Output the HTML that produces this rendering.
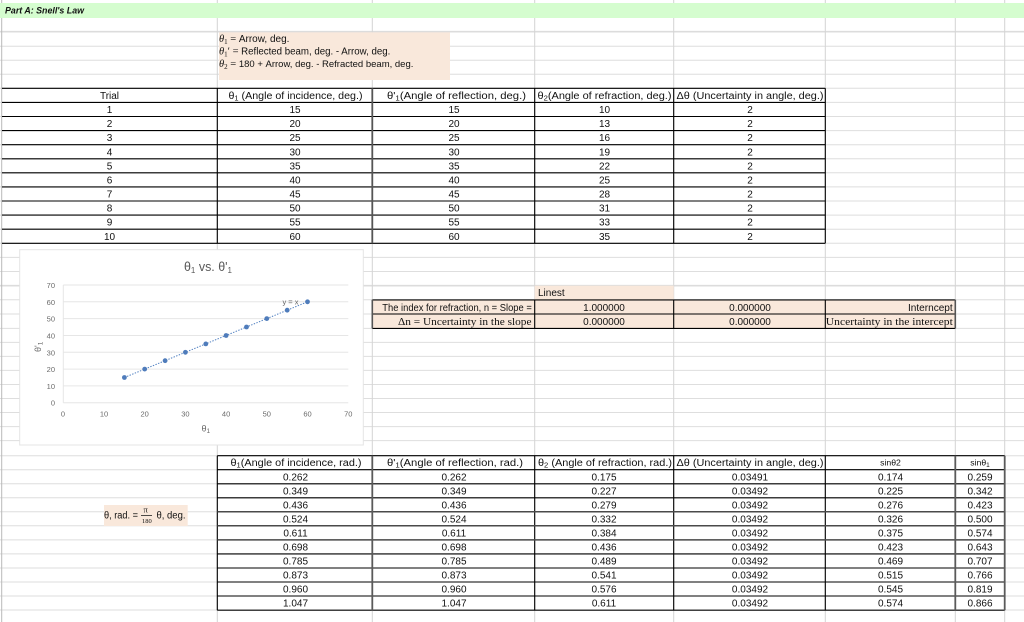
<!DOCTYPE html>
<html><head><meta charset="utf-8"><style>
html,body{margin:0;padding:0;background:#fff;width:1024px;height:622px;overflow:hidden}
svg{display:block}
text{font-family:"Liberation Sans",sans-serif;font-size:10px;fill:#111}
.c text{text-anchor:middle}
.s{font-family:"Liberation Serif",serif}
.ch text{fill:#6a6a6a;font-size:7.5px}
.f text{font-family:"Liberation Serif",serif;font-size:10.5px}
</style></head><body>
<svg width="1024" height="622" viewBox="0 0 1024 622" xmlns="http://www.w3.org/2000/svg">
<rect width="1024" height="622" fill="#fff"/>
<!-- grid -->
<path fill="none" stroke="#dedede" stroke-width="1" d="M0 46.3H1024M0 60.3H1024M0 74.3H1024M0 88.3H1024M0 102.4H1024M0 116.5H1024M0 130.6H1024M0 144.7H1024M0 158.8H1024M0 172.8H1024M0 186.9H1024M0 201H1024M0 215.1H1024M0 229.2H1024M0 243.3H1024M0 257.4H1024M0 271.5H1024M0 299.7H1024M0 314H1024M0 328.4H1024M0 342.4H1024M0 356.4H1024M0 370.4H1024M0 384.5H1024M0 398.5H1024M0 412.5H1024M0 426.6H1024M0 440.6H1024M0 455.7H1024M0 469.7H1024M0 483.8H1024M0 497.8H1024M0 511.8H1024M0 525.8H1024M0 539.9H1024M0 553.9H1024M0 568H1024M0 582H1024M0 596H1024M0 610H1024"/>
<path fill="none" stroke="#dcdcdc" stroke-width="1.6" d="M0 31.7H1024M0 285.7H1024"/>
<path fill="none" stroke="#d4d4d4" stroke-width="1" d="M217.3 0V622M372.3 0V622M534.7 0V622M673.7 0V622M825.3 0V622M955.3 0V622M1004.7 0V622"/>
<path fill="none" stroke="#b9b9b9" stroke-width="1" d="M1.7 0V622"/>
<!-- green title -->
<rect x="0" y="3" width="1024" height="15" fill="#d5fdcf"/>
<text x="5" y="13.5" font-weight="bold" font-style="italic" style="font-size:9px" textLength="79" lengthAdjust="spacingAndGlyphs">Part A: Snell's Law</text>
<!-- formula box -->
<rect x="219" y="32.3" width="231" height="47.7" fill="#f9e8db"/>
<g class="f">
<text x="219" y="42"><tspan font-style="italic">θ</tspan><tspan dy="2" style="font-size:7px">1</tspan><tspan dy="-2"> = </tspan><tspan style="font-family:'Liberation Sans';font-size:10px">Arrow, deg.</tspan></text>
<text x="219" y="54.5"><tspan font-style="italic">θ</tspan><tspan dy="2" style="font-size:7px">1</tspan><tspan dy="-2">′ = </tspan><tspan style="font-family:'Liberation Sans';font-size:9.7px">Reflected beam, deg. - Arrow, deg.</tspan></text>
<text x="219" y="67"><tspan font-style="italic">θ</tspan><tspan dy="2" style="font-size:7px">2</tspan><tspan dy="-2"> = </tspan><tspan style="font-family:'Liberation Sans';font-size:9.5px">180 + Arrow, deg. - Refracted beam, deg.</tspan></text>
</g>
<!-- top table -->
<path fill="none" stroke="#000" stroke-width="1.1" d="M2 88.3H825.3M2 102.4H825.3M2 116.5H825.3M2 130.6H825.3M2 144.7H825.3M2 158.8H825.3M2 172.8H825.3M2 186.9H825.3M2 201H825.3M2 215.1H825.3M2 229.2H825.3M2 243.3H825.3M217.3 88.3V243.3M534.7 88.3V243.3M673.7 88.3V243.3M825.3 88.3V243.3"/>
<path fill="none" stroke="#555" stroke-width="1.8" d="M372.3 88.3V243.3"/>
<text x="109.5" y="99" text-anchor="middle">Trial</text>
<text x="228.5" y="99" textLength="134" lengthAdjust="spacingAndGlyphs">θ<tspan dy="1.5" style="font-size:7px">1</tspan><tspan dy="-1.5"> (Angle of incidence, deg.)</tspan></text>
<text x="387" y="99" textLength="139" lengthAdjust="spacingAndGlyphs">θ'<tspan dy="1.5" style="font-size:7px">1</tspan><tspan dy="-1.5">(Angle of reflection, deg.)</tspan></text>
<text x="537.5" y="99" textLength="134" lengthAdjust="spacingAndGlyphs">θ<tspan dy="1.5" style="font-size:7px">2</tspan><tspan dy="-1.5">(Angle of refraction, deg.)</tspan></text>
<text x="676.5" y="99" textLength="147" lengthAdjust="spacingAndGlyphs">Δθ (Uncertainty in angle, deg.)</text>
<g class="c">
<text x="109.5" y="113">1</text><text x="109.5" y="127.1">2</text><text x="109.5" y="141.2">3</text><text x="109.5" y="155.3">4</text><text x="109.5" y="169.4">5</text><text x="109.5" y="183.4">6</text><text x="109.5" y="197.5">7</text><text x="109.5" y="211.6">8</text><text x="109.5" y="225.7">9</text><text x="109.5" y="239.8">10</text>
<text x="295" y="113">15</text><text x="295" y="127.1">20</text><text x="295" y="141.2">25</text><text x="295" y="155.3">30</text><text x="295" y="169.4">35</text><text x="295" y="183.4">40</text><text x="295" y="197.5">45</text><text x="295" y="211.6">50</text><text x="295" y="225.7">55</text><text x="295" y="239.8">60</text>
<text x="454" y="113">15</text><text x="454" y="127.1">20</text><text x="454" y="141.2">25</text><text x="454" y="155.3">30</text><text x="454" y="169.4">35</text><text x="454" y="183.4">40</text><text x="454" y="197.5">45</text><text x="454" y="211.6">50</text><text x="454" y="225.7">55</text><text x="454" y="239.8">60</text>
<text x="604.5" y="113">10</text><text x="604.5" y="127.1">13</text><text x="604.5" y="141.2">16</text><text x="604.5" y="155.3">19</text><text x="604.5" y="169.4">22</text><text x="604.5" y="183.4">25</text><text x="604.5" y="197.5">28</text><text x="604.5" y="211.6">31</text><text x="604.5" y="225.7">33</text><text x="604.5" y="239.8">35</text>
<text x="750" y="113">2</text><text x="750" y="127.1">2</text><text x="750" y="141.2">2</text><text x="750" y="155.3">2</text><text x="750" y="169.4">2</text><text x="750" y="183.4">2</text><text x="750" y="197.5">2</text><text x="750" y="211.6">2</text><text x="750" y="225.7">2</text><text x="750" y="239.8">2</text>
</g>
<!-- chart -->
<rect x="19.7" y="249.7" width="343.6" height="195.3" fill="#fff" stroke="#e4e4e4" stroke-width="1"/>
<path fill="none" stroke="#e6e6e6" stroke-width="1" d="M63.3 285H348.3M63.3 301.8H348.3M63.3 318.6H348.3M63.3 335.5H348.3M63.3 352.3H348.3M63.3 369.1H348.3M63.3 385.9H348.3M63.3 402.7H348.3M63.3 285V402.7"/>
<path fill="none" stroke="#4f7fc0" stroke-width="1" stroke-dasharray="1.4 1.4" d="M124.4 377.5L307.5 301.8"/>
<g fill="#4f7cbb">
<circle cx="124.4" cy="377.5" r="2.4"/><circle cx="144.7" cy="369.1" r="2.4"/><circle cx="165.1" cy="360.7" r="2.4"/><circle cx="185.4" cy="352.3" r="2.4"/><circle cx="205.8" cy="343.9" r="2.4"/><circle cx="226.1" cy="335.5" r="2.4"/><circle cx="246.5" cy="327" r="2.4"/><circle cx="266.8" cy="318.6" r="2.4"/><circle cx="287.2" cy="310.2" r="2.4"/><circle cx="307.5" cy="301.8" r="2.4"/>
</g>
<text x="184" y="271" textLength="48" lengthAdjust="spacingAndGlyphs" style="font-family:'Liberation Sans',sans-serif;font-size:12.5px;fill:#595959">θ<tspan dy="2" style="font-size:8px;fill:#595959">1</tspan><tspan dy="-2" style="fill:#595959"> vs. θ'</tspan><tspan dy="2" style="font-size:8px;fill:#595959">1</tspan></text>
<g class="ch">
<text x="55" y="288" text-anchor="end">70</text><text x="55" y="304.8" text-anchor="end">60</text><text x="55" y="321.6" text-anchor="end">50</text><text x="55" y="338.5" text-anchor="end">40</text><text x="55" y="355.3" text-anchor="end">30</text><text x="55" y="372.1" text-anchor="end">20</text><text x="55" y="388.9" text-anchor="end">10</text><text x="55" y="405.7" text-anchor="end">0</text>
<text x="63" y="416.5" text-anchor="middle">0</text><text x="104" y="416.5" text-anchor="middle">10</text><text x="144.7" y="416.5" text-anchor="middle">20</text><text x="185.4" y="416.5" text-anchor="middle">30</text><text x="226.1" y="416.5" text-anchor="middle">40</text><text x="266.8" y="416.5" text-anchor="middle">50</text><text x="307.5" y="416.5" text-anchor="middle">60</text><text x="348.3" y="416.5" text-anchor="middle">70</text>
<text x="290.5" y="304.5" text-anchor="middle">y = x</text>
<text x="201.5" y="431.5" style="font-family:'Liberation Sans',sans-serif;font-size:9px">θ<tspan dy="1.5" style="font-size:6.5px">1</tspan></text>
<text transform="translate(41,352) rotate(-90)" style="font-family:'Liberation Sans',sans-serif;font-size:9px">θ'<tspan dy="1.5" style="font-size:6.5px">1</tspan></text>
</g>
<!-- linest table -->
<rect x="534.7" y="285.7" width="139" height="14" fill="#f9e8db"/>
<rect x="372.3" y="299.7" width="583" height="28.7" fill="#f9e8db"/>
<path fill="none" stroke="#000" stroke-width="1.1" d="M372.3 299.9H955.3M372.3 314H955.3M372.3 328.4H955.3M534.7 299.7V328.4M673.7 299.7V328.4M825.3 299.7V328.4"/>
<path fill="none" stroke="#555" stroke-width="1.6" d="M372.3 299.7V328.4M955.3 299.7V328.4"/>
<text x="538" y="296" style="font-size:10px">Linest</text>
<text x="382.3" y="311" textLength="149.5" lengthAdjust="spacingAndGlyphs">The index for refraction, n = Slope =</text>
<text x="398" y="325" class="s" textLength="133.5" lengthAdjust="spacingAndGlyphs" style="font-size:10.5px">Δn = Uncertainty in the slope</text>
<text x="908" y="311" textLength="44.7" lengthAdjust="spacingAndGlyphs">Interncept</text>
<text x="825.8" y="325" class="s" textLength="127" lengthAdjust="spacingAndGlyphs" style="font-size:10.5px">Uncertainty in the intercept</text>
<g class="c">
<text x="604" y="311">1.000000</text><text x="604" y="325">0.000000</text>
<text x="750" y="311">0.000000</text><text x="750" y="325">0.000000</text>
</g>
<!-- conversion box -->
<rect x="104" y="505" width="83.7" height="21" fill="#f9e8db"/>
<text x="104" y="518.5" textLength="34" lengthAdjust="spacingAndGlyphs" style="font-size:10px">θ, rad. =</text>
<text x="143.5" y="512.5" style="font-family:'Liberation Serif',serif;font-size:8.5px">π</text>
<path d="M141 515.5H152" stroke="#222" stroke-width=".8"/>
<text x="142" y="522.8" style="font-family:'Liberation Serif',serif;font-size:6.5px">180</text>
<text x="156.5" y="518.5" textLength="29" lengthAdjust="spacingAndGlyphs" style="font-size:10px">θ, deg.</text>
<!-- bottom table -->
<path fill="none" stroke="#000" stroke-width="1.1" d="M217.3 455.7H1004.7M217.3 469.7H1004.7M217.3 483.8H1004.7M217.3 497.8H1004.7M217.3 553.9H1004.7M217.3 568H1004.7M217.3 582H1004.7M217.3 596H1004.7M217.3 610.2H1004.7M217.3 455.7V610.2M534.7 455.7V610.2M673.7 455.7V610.2M825.3 455.7V610.2"/>
<path fill="none" stroke="#4a4a4a" stroke-width="1.5" d="M217.3 511.8H1004.7M217.3 525.8H1004.7M217.3 539.9H1004.7"/>
<path fill="none" stroke="#5a5a5a" stroke-width="1.8" d="M372.3 455.7V610.2M955.3 455.7V610.2M1004.7 455.7V610.2"/>
<text x="230.5" y="466" textLength="131" lengthAdjust="spacingAndGlyphs">θ<tspan dy="1.5" style="font-size:7px">1</tspan><tspan dy="-1.5">(Angle of incidence, rad.)</tspan></text>
<text x="387" y="466" textLength="136" lengthAdjust="spacingAndGlyphs">θ'<tspan dy="1.5" style="font-size:7px">1</tspan><tspan dy="-1.5">(Angle of reflection, rad.)</tspan></text>
<text x="538" y="466" textLength="134" lengthAdjust="spacingAndGlyphs">θ<tspan dy="1.5" style="font-size:7px">2</tspan><tspan dy="-1.5"> (Angle of refraction, rad.)</tspan></text>
<text x="676.5" y="466" textLength="147" lengthAdjust="spacingAndGlyphs">Δθ (Uncertainty in angle, deg.)</text>
<g class="c">
<text x="890.5" y="465.5" style="font-size:8.7px">sinθ2</text>
<text x="980" y="465.5" style="font-size:8.7px">sinθ<tspan dy="1.5" style="font-size:6.5px">1</tspan></text>
<text x="295.5" y="480.3">0.262</text><text x="295.5" y="494.4">0.349</text><text x="295.5" y="508.4">0.436</text><text x="295.5" y="522.4">0.524</text><text x="295.5" y="536.4">0.611</text><text x="295.5" y="550.5">0.698</text><text x="295.5" y="564.5">0.785</text><text x="295.5" y="578.6">0.873</text><text x="295.5" y="592.6">0.960</text><text x="295.5" y="606.6">1.047</text>
<text x="454" y="480.3">0.262</text><text x="454" y="494.4">0.349</text><text x="454" y="508.4">0.436</text><text x="454" y="522.4">0.524</text><text x="454" y="536.4">0.611</text><text x="454" y="550.5">0.698</text><text x="454" y="564.5">0.785</text><text x="454" y="578.6">0.873</text><text x="454" y="592.6">0.960</text><text x="454" y="606.6">1.047</text>
<text x="604" y="480.3">0.175</text><text x="604" y="494.4">0.227</text><text x="604" y="508.4">0.279</text><text x="604" y="522.4">0.332</text><text x="604" y="536.4">0.384</text><text x="604" y="550.5">0.436</text><text x="604" y="564.5">0.489</text><text x="604" y="578.6">0.541</text><text x="604" y="592.6">0.576</text><text x="604" y="606.6">0.611</text>
<text x="750" y="480.3">0.03491</text><text x="750" y="494.4">0.03492</text><text x="750" y="508.4">0.03492</text><text x="750" y="522.4">0.03492</text><text x="750" y="536.4">0.03492</text><text x="750" y="550.5">0.03492</text><text x="750" y="564.5">0.03492</text><text x="750" y="578.6">0.03492</text><text x="750" y="592.6">0.03492</text><text x="750" y="606.6">0.03492</text>
<text x="890.5" y="480.3">0.174</text><text x="890.5" y="494.4">0.225</text><text x="890.5" y="508.4">0.276</text><text x="890.5" y="522.4">0.326</text><text x="890.5" y="536.4">0.375</text><text x="890.5" y="550.5">0.423</text><text x="890.5" y="564.5">0.469</text><text x="890.5" y="578.6">0.515</text><text x="890.5" y="592.6">0.545</text><text x="890.5" y="606.6">0.574</text>
<text x="980" y="480.3">0.259</text><text x="980" y="494.4">0.342</text><text x="980" y="508.4">0.423</text><text x="980" y="522.4">0.500</text><text x="980" y="536.4">0.574</text><text x="980" y="550.5">0.643</text><text x="980" y="564.5">0.707</text><text x="980" y="578.6">0.766</text><text x="980" y="592.6">0.819</text><text x="980" y="606.6">0.866</text>
</g>
</svg>
</body></html>
